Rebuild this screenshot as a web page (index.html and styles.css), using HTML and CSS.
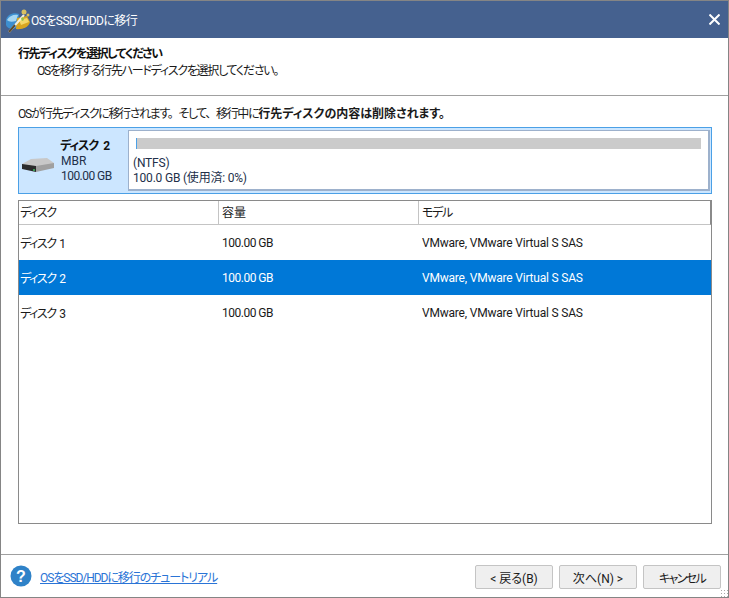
FILE: index.html
```html
<!DOCTYPE html>
<html lang="ja">
<head>
<meta charset="utf-8">
<title>OSをSSD/HDDに移行</title>
<link rel="stylesheet" href="styles.css">
</head>
<body>
<div class="window">
  <header class="titlebar">
    <svg class="app-icon" width="26" height="26" viewBox="0 0 26 26">
      <path d="M2 13 C3 8 9 5 15 7 L14 20 C9 23 3 22 2 18Z" fill="#3d8fd0"/>
      <path d="M3 13 C5 9 10 7 14 8 L12 14 C8 15 5 15 3 13Z" fill="#a6d6f2"/>
      <path d="M13 11 L23 9 L26 15 C25 20 18 23 12 22Z" fill="#d9a520"/>
      <path d="M15 13 L23 11 L25 15 L17 18Z" fill="#f4d768"/>
      <path d="M5 25 L20 8" stroke="#f3efe0" stroke-width="2"/>
      <path d="M5 25 L11 18" stroke="#5a4a30" stroke-width="2"/>
      <path d="M17 11 l2 -1 1 3 -2 1z" fill="#8fc34a"/>
      <circle cx="20" cy="5" r="2.500" fill="#d8c060"/>
      <circle cx="24" cy="8" r="1.500" fill="#d8c060"/>
    </svg>
    <span class="title-text">OSをSSD/HDDに移行</span>
    <svg class="close" width="11" height="11" viewBox="0 0 11 11"><path d="M0.500 0.500 L10.500 10.500 M10.500 0.500 L0.500 10.500" stroke="#fff" stroke-width="2"/></svg>
  </header>

  <section class="intro">
    <h1 class="intro-title">行先ディスクを選択してください</h1>
    <p class="intro-sub">OSを移行する行先ハードディスクを選択してください。</p>
  </section>

  <main class="content">
    <p class="notice"><span class="notice-lead">OSが行先ディスクに移行されます。<span class="gap"></span>そして、<span class="gap"></span>移行中に</span><b>行先ディスクの内容は削除されます。</b></p>

    <div class="disk-card">
      <div class="disk-info">
        <svg class="disk-icon" width="33" height="15" viewBox="0 0 33 15">
          <path d="M0 6 L9 1 L25 0 L32 5 L32 8 L0 9Z" fill="#c8c8c8"/>
          <path d="M14 8 L32 5 L32 10 L14 14Z" fill="#a0a0a0"/>
          <path d="M0 6 L14 8 L14 14 L0 11Z" fill="#2c2c2c"/>
          <circle cx="12" cy="12" r="1" fill="#3fc060"/>
        </svg>
        <div class="disk-text">
          <div class="disk-name">ディスク 2</div>
          <div>MBR</div>
          <div class="disk-size">100.00 GB</div>
        </div>
      </div>
      <div class="disk-part">
        <div class="usage"><span class="usage-mark"></span></div>
        <div class="part-label">(NTFS)</div>
        <div class="part-label">100.0 GB (使用済: 0%)</div>
      </div>
    </div>

    <div class="table">
      <div class="thead">
        <div class="th col1">ディスク</div>
        <div class="th col2">容量</div>
        <div class="th col3 kana">モデル</div>
      </div>
      <div class="row"><div class="col1">ディスク 1</div><div class="col2 size">100.00 GB</div><div class="col3">VMware, VMware Virtual S SAS</div></div>
      <div class="row selected"><div class="col1">ディスク 2</div><div class="col2 size">100.00 GB</div><div class="col3">VMware, VMware Virtual S SAS</div></div>
      <div class="row"><div class="col1">ディスク 3</div><div class="col2 size">100.00 GB</div><div class="col3">VMware, VMware Virtual S SAS</div></div>
    </div>
  </main>

  <footer class="footer">
    <svg class="help" width="22" height="22" viewBox="0 0 22 22">
      <circle cx="11" cy="11" r="10.500" fill="#2f82c8"/>
      <text x="11" y="17" text-anchor="middle" class="help-mark">?</text>
    </svg>
    <a class="tutorial" href="#">OSをSSD/HDDに移行のチュートリアル</a>
    <div class="buttons">
      <button class="btn">&lt; 戻る(B)</button>
      <button class="btn">次へ(N) &gt;</button>
      <button class="btn kana">キャンセル</button>
    </div>
    <span class="grip"></span>
  </footer>
</div>
</body>
</html>
```
FILE: styles.css
```css
* { box-sizing: border-box; }
html, body { margin: 0; padding: 0; }
body {
  width: 729px;
  height: 598px;
  overflow: hidden;
  font-family: Roboto, "Noto Sans CJK JP", sans-serif;
  font-feature-settings: "palt";
  font-size: 12px;
  color: #1a1a1a;
  background: #fff;
}
.window {
  width: 729px;
  height: 598px;
  display: flex;
  flex-direction: column;
  border: 1px solid #858585;
  position: relative;
}
.titlebar {
  height: 37px;
  flex: none;
  background: #45618f;
  display: flex;
  align-items: center;
  color: #fff;
  padding-left: 3px;
}
.app-icon { flex: none; }
.title-text { margin-left: 1px; font-size: 12px; letter-spacing: -0.55px; }
.close { margin-left: auto; margin-right: 8px; }
.intro {
  height: 58px;
  flex: none;
  padding: 9px 0 0 17px;
  border-bottom: 1px solid #a0a0a0;
}
.intro-title { margin: 0; font-size: 12px; font-weight: bold; line-height: 15px; color: #111; letter-spacing: -1.4px; }
.intro-sub { margin: 2px 0 0 19px; line-height: 15px; letter-spacing: -1.27px; }
.content { flex: 1; padding: 0 16px 0 17px; display: flex; flex-direction: column; min-height: 0; }
.notice { margin: 10px 0 0; line-height: 16px; }
.notice-lead { letter-spacing: -1.35px; }
.gap { display: inline-block; width: 6px; }
.notice b { font-weight: bold; }
.disk-card {
  margin-top: 5px;
  height: 67px;
  flex: none;
  border: 1px solid #4ba0e6;
  background: #cce6ff;
  display: flex;
  padding: 2px 1px 2px 0;
}
.disk-info { width: 109px; flex: none; display: flex; align-items: center; padding-left: 3px; }
.disk-icon { flex: none; margin-top: 10px; }
.disk-text { margin-left: 6px; line-height: 15px; color: #22304a; margin-top: 2px; }
.disk-name { font-weight: bold; color: #111; font-size: 12px; letter-spacing: -1px; word-spacing: 3px; margin-left: -1px; }
.disk-size { letter-spacing: -0.55px; }
.disk-part {
  flex: 1;
  background: #fff;
  border: 1px solid #9db1cc;
  border-width: 1px 2px 2px 1px;
  padding: 7px 7px 0 4px;
  line-height: 15px;
  color: #22304a;
}
.part-label { letter-spacing: -0.2px; }
.usage { height: 11px; background: #cbcbcb; margin: 0 0 7px 3px; }
.usage-mark { display: block; width: 1px; height: 11px; background: #4ba0e6; }
.table {
  margin-top: 6px;
  flex: 1;
  min-height: 0;
  border: 1px solid #8a8a8a;
  margin-bottom: 30px;
}
.thead { display: flex; height: 24px; border-bottom: 1px solid #c4c4c4; border-right: 1px solid #8a8a8a; line-height: 25px; }
.th { border-right: 1px solid #c4c4c4; }
.th.col3 { border-right: 0; }
.col1 { width: 200px; padding-left: 1px; flex: none; letter-spacing: -1.4px; word-spacing: 2px; }
.col2 { width: 200px; padding-left: 3px; flex: none; }
.col3 { flex: 1; padding-left: 3px; letter-spacing: -0.2px; }
.size { letter-spacing: -0.5px; }
.th.kana { letter-spacing: -1.3px; }
.row { display: flex; height: 35px; align-items: center; }
.row.selected { background: #0078d7; color: #fff; }
.footer {
  height: 43px;
  flex: none;
  border-top: 1px solid #a0a0a0;
  display: flex;
  align-items: center;
  padding: 0 7px 0 9px;
}
.help { flex: none; }
.help-mark { font: bold 16px "Liberation Sans", sans-serif; fill: #fff; }
.tutorial { margin-left: 8px; color: #2a74d6; text-decoration: underline; letter-spacing: -1.05px; }
.buttons { margin-left: auto; display: flex; gap: 6px; margin-top: 2px; }
.btn {
  width: 78px;
  height: 24px;
  padding: 0;
  background: #efefef;
  border: 1px solid #c4c4c4;
  border-radius: 2px;
  font: inherit;
  font-feature-settings: "palt";
  color: #1a1a1a;
}
.btn.kana { letter-spacing: -1.6px; }
.grip {
  position: absolute;
  right: 0;
  bottom: 0;
  width: 8px;
  height: 8px;
  background: radial-gradient(circle, #a8a8a8 1px, transparent 1px) 0 0 / 3px 3px;
}
```
